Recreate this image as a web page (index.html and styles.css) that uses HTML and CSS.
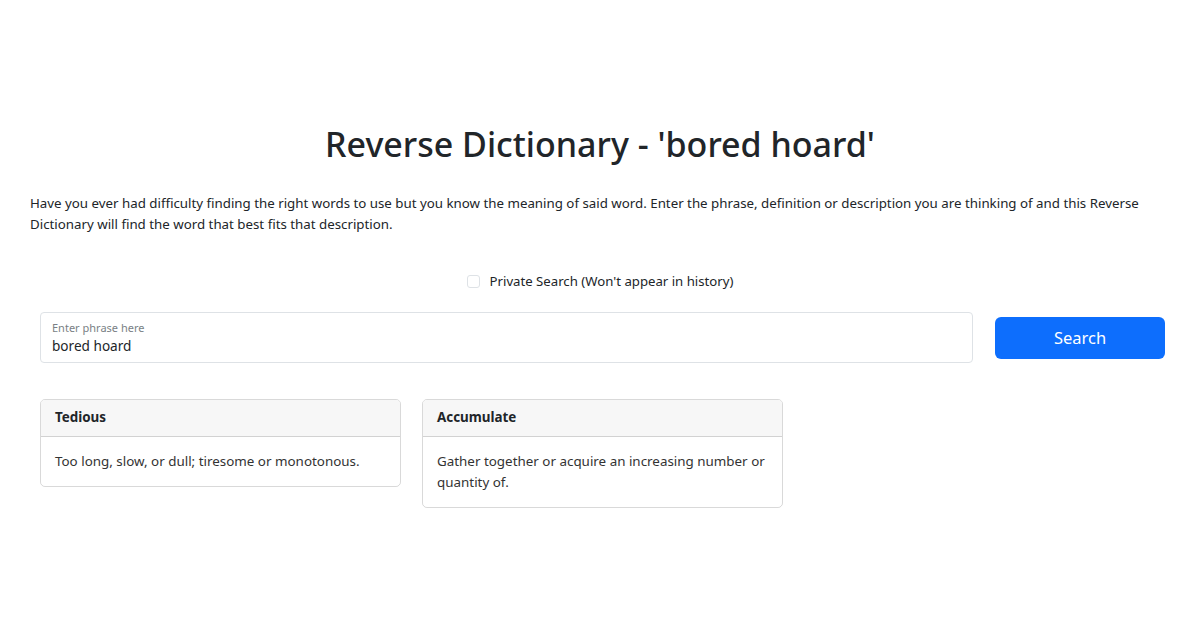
FILE: index.html
```html
<!DOCTYPE html>
<html lang="en">

<head>
  <meta charset="UTF-8">
  <meta name="viewport" content="width=device-width, initial-scale=1.0">
  <title>Reverse Dictionary</title>
  <link rel="stylesheet" href="styles.css">
</head>

<body>
  <main class="page">
    <h1 class="title">Reverse Dictionary - 'bored hoard'</h1>
    <p class="intro">Have you ever had difficulty finding the right words to use but you know the meaning of said word. Enter the phrase, definition or description you are thinking of and this Reverse Dictionary will find the word that best fits that description.</p>

    <div class="private">
      <span class="check"></span>
      <label>Private Search (Won't appear in history)</label>
    </div>

    <form class="search">
      <div class="field">
        <span class="field-label">Enter phrase here</span>
        <span class="field-value">bored hoard</span>
      </div>
      <button type="button" class="btn">Search</button>
    </form>

    <div class="results">
      <div class="card">
        <div class="card-head">Tedious</div>
        <div class="card-body">Too long, slow, or dull; tiresome or monotonous.</div>
      </div>
      <div class="card">
        <div class="card-head">Accumulate</div>
        <div class="card-body">Gather together or acquire an increasing number or quantity of.</div>
      </div>
    </div>
  </main>
</body>

</html>
```

FILE: styles.css
```css
* {
  margin: 0;
  padding: 0;
  box-sizing: border-box;
}

body {
  background: #fff;
  color: #212529;
  font-family: "Noto Sans", "Open Sans", sans-serif;
  font-size: 14px;
  line-height: 21px;
}

.page {
  width: 1140px;
  margin: 0 auto;
  padding-top: 122px;
}

.title {
  text-align: center;
  font-size: 34px;
  font-weight: 500;
  line-height: 44px;
  margin-bottom: 27px;
}

.intro {
  font-size: 13.3px;
  margin-bottom: 36px;
}

.private {
  display: flex;
  justify-content: center;
  align-items: center;
  gap: 10px;
  margin-bottom: 20px;
}

.private label {
  font-size: 13.2px;
}

.check {
  width: 13px;
  height: 13px;
  border: 1px solid #dee2e6;
  border-radius: 3px;
}

.search {
  display: flex;
  align-items: center;
  gap: 22px;
  padding: 0 5px 0 10px;
  margin-bottom: 36px;
}

.field {
  flex: 1;
  height: 51px;
  border: 1px solid #dee2e6;
  border-radius: 4px;
  padding: 8px 11px;
  display: flex;
  flex-direction: column;
}

.field-label {
  font-size: 11px;
  line-height: 14px;
  color: #7a7f85;
}

.field-value {
  font-size: 13.6px;
  line-height: 22px;
}

.btn {
  width: 170px;
  height: 42px;
  border: none;
  border-radius: 6px;
  background: #0d6efd;
  color: #fff;
  font-family: inherit;
  font-size: 16.5px;
}

.results {
  display: grid;
  grid-template-columns: repeat(3, 1fr);
  gap: 21px;
  align-items: start;
  padding: 0 5px 0 10px;
}

.card {
  border: 1px solid rgba(0, 0, 0, .15);
  border-radius: 5px;
  overflow: hidden;
}

.card-head {
  background: #f7f7f7;
  border-bottom: 1px solid rgba(0, 0, 0, .15);
  padding: 7px 14px;
  height: 37px;
  font-size: 13.4px;
  font-weight: 700;
}

.card-body {
  padding: 14px 14px 14px;
  font-size: 13.4px;
  color: #333;
}
```
